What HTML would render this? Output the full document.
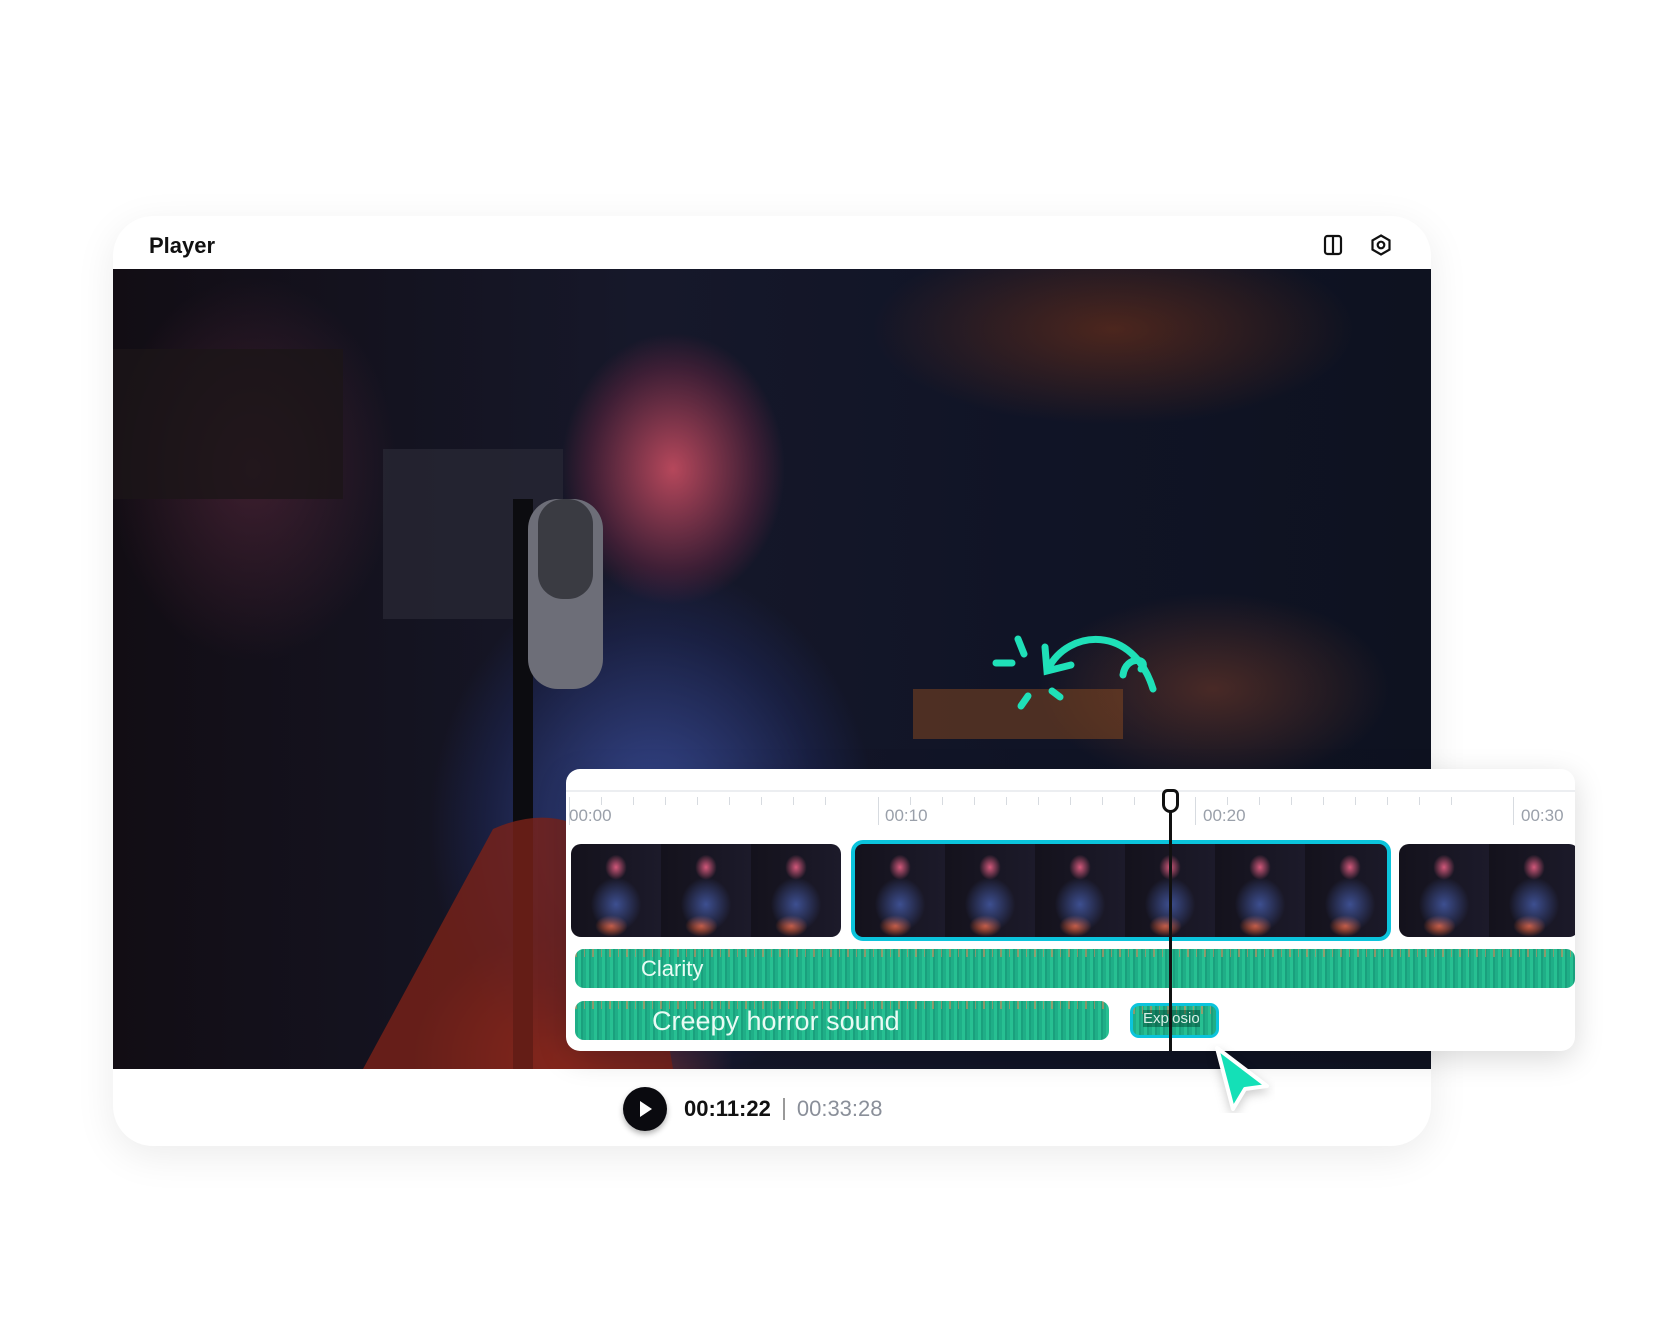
<!DOCTYPE html>
<html><head><meta charset="utf-8"><style>
*{margin:0;padding:0;box-sizing:border-box}
body{width:1680px;height:1344px;background:#fff;position:relative;overflow:hidden;font-family:"Liberation Sans",sans-serif}
.card{position:absolute;left:113px;top:216px;width:1318px;height:930px;background:#fff;border-radius:40px;box-shadow:0 10px 40px rgba(0,0,0,.08);overflow:hidden}
.hdr{position:absolute;left:36px;top:17px;font-size:22px;font-weight:bold;color:#111}
.video{position:absolute;left:0;top:53px;width:1318px;height:800px;overflow:hidden;
background:
radial-gradient(ellipse 140px 170px at 560px 200px,rgba(210,80,100,.85),rgba(120,40,70,.4) 60%,transparent 80%),
radial-gradient(ellipse 280px 330px at 540px 560px,rgba(60,80,160,.9),rgba(30,40,90,.5) 60%,transparent 80%),
radial-gradient(ellipse 200px 160px at 460px 790px,rgba(220,70,50,.8),transparent 80%),
radial-gradient(ellipse 220px 120px at 1100px 420px,rgba(120,60,40,.55),transparent 80%),
radial-gradient(ellipse 300px 120px at 1000px 60px,rgba(150,60,20,.45),transparent 80%),
radial-gradient(ellipse 180px 240px at 140px 200px,rgba(90,40,60,.6),transparent 80%),
linear-gradient(90deg,#120d14,#16182a 40%,#101426 70%,#0e1220);}
.ctrl{position:absolute;top:871px;left:510px;display:flex;align-items:center}
.play{width:44px;height:44px;border-radius:50%;background:#0a0a0f;box-shadow:0 3px 6px rgba(0,0,0,.3);position:relative}
.play:after{content:"";position:absolute;left:17px;top:14px;border-left:12px solid #fff;border-top:8px solid transparent;border-bottom:8px solid transparent}
.t1{margin-left:17px;font-size:22px;font-weight:bold;color:#111}
.sep{margin:0 12px;width:2px;height:22px;background:#999}
.t2{font-size:22px;color:#8a8f99}
.tl{position:absolute;left:566px;top:769px;width:1009px;height:282px;background:#fff;border-radius:14px;box-shadow:0 8px 30px rgba(0,0,0,.15);overflow:hidden}
.ruler{position:absolute;left:0;top:21px;width:100%;height:2px;background:#eceef1}
.lab{position:absolute;top:37px;font-size:17px;color:#9aa0aa}
.tick{position:absolute;top:28px;width:1px;height:8px;background:#d7dbe0}
.big{position:absolute;top:28px;width:1px;height:28px;background:#d7dbe0}
.clip{position:absolute;top:75px;height:93px;border-radius:10px;overflow:hidden;
background:
radial-gradient(ellipse 12px 14px at 50% 25%,#d2587a,transparent 90%),
radial-gradient(ellipse 28px 30px at 50% 65%,#3d4f90,transparent 90%),
radial-gradient(ellipse 18px 12px at 45% 88%,#e0603a,transparent 90%),
linear-gradient(90deg,#14121c,#1c1a2a);background-size:90px 100%;}
.sel{border:4px solid #0bc4dc;top:71px;height:101px;border-radius:12px}
.bar{position:absolute;border-radius:9px;background:repeating-linear-gradient(90deg,#1fae87 0 3px,#27c092 3px 6px,#1aa07d 6px 8px);overflow:hidden}
.bar:before{content:"";position:absolute;left:0;right:0;top:0;height:8px;background:repeating-linear-gradient(90deg,#d58a5a 0 2px,transparent 2px 9px,#c98c60 9px 10px,transparent 10px 17px);opacity:.6}
.bar span{position:absolute;color:#e9fbf4;}
</style></head><body>
<div class="card">
<div class="hdr">Player</div>
<svg style="position:absolute;left:1209px;top:18px" width="22" height="22" viewBox="0 0 22 22" fill="none" stroke="#111" stroke-width="2.2"><rect x="3" y="2" width="16" height="18" rx="2.5"/><line x1="11" y1="2" x2="11" y2="20"/></svg>
<svg style="position:absolute;left:1256px;top:17px" width="24" height="24" viewBox="0 0 24 24" fill="none" stroke="#111" stroke-width="2.2"><path d="M12 2.5l8.5 4.9v9.2L12 21.5l-8.5-4.9V7.4z"/><circle cx="12" cy="12" r="3.3"/></svg>
<div class="video">
<svg style="position:absolute;left:0;top:0" width="1318" height="800">
<rect x="0" y="80" width="230" height="150" fill="#1b1518" opacity=".8"/>
<rect x="270" y="180" width="180" height="170" fill="#2a2a36" opacity=".7"/>
<rect x="400" y="230" width="20" height="570" fill="#0c0c10"/>
<rect x="415" y="230" width="75" height="190" rx="30" fill="#6d6e78"/>
<rect x="425" y="230" width="55" height="100" rx="25" fill="#3a3b42"/>
<path d="M380 560 Q470 520 530 620 L560 800 L250 800 Z" fill="#7a2218" opacity=".8"/>
<rect x="800" y="420" width="210" height="50" fill="#8a4a20" opacity=".5"/>
<g fill="none" stroke="#1fe0b8" stroke-width="7" stroke-linecap="round">
<path d="M1040 420 C1020 355 955 360 935 400"/>
<path d="M932 378 L934 402 L958 396"/>
<path d="M1010 406 C1013 385 1038 390 1028 400"/>
<path d="M905 370 L911 385"/><path d="M883 394 L899 394"/><path d="M915 427 L908 437"/><path d="M939 422 L947 428"/>
</g>
</svg>
</div>
<div class="ctrl"><div class="play"></div><div class="t1">00:11:22</div><div class="sep"></div><div class="t2">00:33:28</div></div>
</div>
<div class="tl">
<div class="ruler"></div>
<div class="big" style="left:3px"></div><div class="big" style="left:312px"></div><div class="big" style="left:629px"></div><div class="big" style="left:947px"></div>
<div class="lab" style="left:3px">00:00</div><div class="lab" style="left:319px">00:10</div><div class="lab" style="left:637px">00:20</div><div class="lab" style="left:955px">00:30</div>
<div class="tick" style="left:35px"></div><div class="tick" style="left:67px"></div><div class="tick" style="left:99px"></div><div class="tick" style="left:131px"></div><div class="tick" style="left:163px"></div><div class="tick" style="left:195px"></div><div class="tick" style="left:227px"></div><div class="tick" style="left:259px"></div><div class="tick" style="left:344px"></div><div class="tick" style="left:376px"></div><div class="tick" style="left:408px"></div><div class="tick" style="left:440px"></div><div class="tick" style="left:472px"></div><div class="tick" style="left:504px"></div><div class="tick" style="left:536px"></div><div class="tick" style="left:568px"></div><div class="tick" style="left:661px"></div><div class="tick" style="left:693px"></div><div class="tick" style="left:725px"></div><div class="tick" style="left:757px"></div><div class="tick" style="left:789px"></div><div class="tick" style="left:821px"></div><div class="tick" style="left:853px"></div><div class="tick" style="left:885px"></div>
<div class="clip" style="left:5px;width:270px"></div>
<div class="clip sel" style="left:285px;width:540px"></div>
<div class="clip" style="left:833px;width:180px"></div>
<div class="bar" style="left:9px;top:180px;width:1000px;height:39px"><span style="left:66px;top:7px;font-size:22px">Clarity</span></div>
<div class="bar" style="left:9px;top:232px;width:534px;height:39px"><span style="left:77px;top:5px;font-size:27px">Creepy horror sound</span></div>
<div class="bar" style="left:564px;top:234px;width:89px;height:35px;border:3px solid #0bc4dc"><span style="left:10px;top:4px;font-size:15px;color:#d8efe6;background:rgba(0,60,40,.45)">Explosio</span></div>
<div style="position:absolute;left:603px;top:20px;width:3px;height:262px;background:#111"></div>
<div style="position:absolute;left:596px;top:20px;width:17px;height:24px;border:3px solid #111;border-radius:6px 6px 9px 9px;background:#fff"></div>
</div>
<svg style="position:absolute;left:1205px;top:1043px" width="70" height="70" viewBox="0 0 70 70"><path d="M12 5 L62 43 L40 46 L28 66 Z" fill="#14e0b7" stroke="#fff" stroke-width="4" stroke-linejoin="round" style="filter:drop-shadow(0 4px 5px rgba(0,0,0,.2))"/></svg>
</body></html>
